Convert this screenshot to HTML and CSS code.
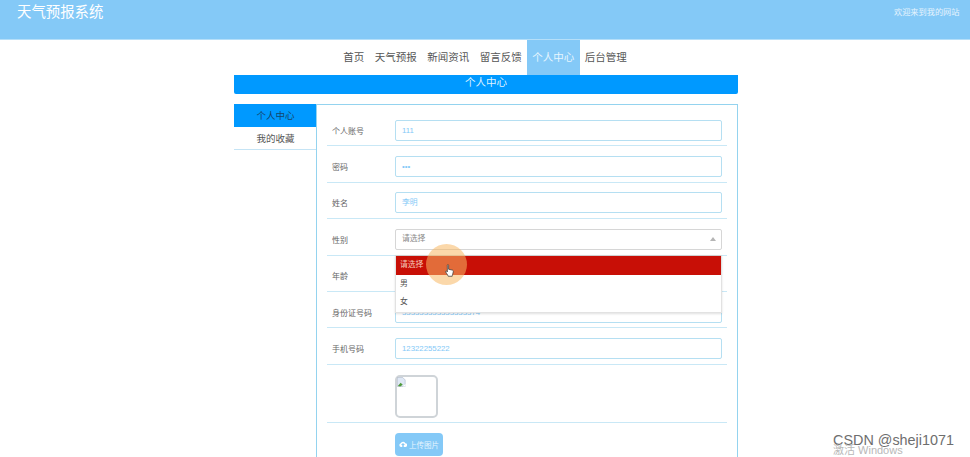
FILE: index.html
```html
<!DOCTYPE html>
<html lang="zh-CN">
<head>
    <meta charset="UTF-8">
    <title>天气预报系统</title>
    <link rel="stylesheet" href="styles.css">
</head>
<body>
    <header class="top">
        <h1>天气预报系统</h1>
        <span class="welcome">欢迎来到我的网站</span>
    </header>
    <nav class="nav">
        <a href="#">首页</a>
        <a href="#">天气预报</a>
        <a href="#">新闻资讯</a>
        <a href="#">留言反馈</a>
        <a href="#" class="active">个人中心</a>
        <a href="#">后台管理</a>
    </nav>
    <div class="wrap">
        <div class="title-bar">个人中心</div>
        <div class="content">
            <aside class="side">
                <a href="#" class="active">个人中心</a>
                <a href="#">我的收藏</a>
            </aside>
            <form class="main">
                <div class="row">
                    <label>个人账号</label>
                    <div class="field">111</div>
                </div>
                <div class="row">
                    <label>密码</label>
                    <div class="field">•••</div>
                </div>
                <div class="row">
                    <label>姓名</label>
                    <div class="field">李明</div>
                </div>
                <div class="row">
                    <label>性别</label>
                    <div class="field select">
                        <span>请选择</span>
                        <svg class="caret" width="6" height="4" viewBox="0 0 6 4"><path d="M0 4 L3 0 L6 4 Z" fill="#b5b5b5"/></svg>
                        <ul class="dropdown">
                            <li class="on">请选择</li>
                            <li>男</li>
                            <li>女</li>
                        </ul>
                    </div>
                </div>
                <div class="row">
                    <label>年龄</label>
                    <div class="field"></div>
                </div>
                <div class="row">
                    <label>身份证号码</label>
                    <div class="field">333333333333333374</div>
                </div>
                <div class="row">
                    <label>手机号码</label>
                    <div class="field">12322255222</div>
                </div>
                <div class="row row-img">
                    <div class="pic">
                        <svg width="9" height="10" viewBox="0 0 11 12">
                            <path d="M0.5 0.5 H7 L10 3.5 V11.5 H0.5 Z" fill="#dfe8f5" stroke="#a9b4c4" stroke-width="0.7"/>
                            <path d="M1 11 L4.5 7 L7 9.5 L4 11.5 Z" fill="#4f9a3c"/>
                            <path d="M7 11.5 L10.5 8 V11.5 Z" fill="#fff"/>
                        </svg>
                    </div>
                </div>
                <div class="row row-btn">
                    <button type="button" class="upload">
                        <svg width="8" height="6" viewBox="0 0 16 12"><path d="M4 12 A3.8 3.8 0 0 1 3.4 4.6 A5 5 0 0 1 12.6 4.4 A3.8 3.8 0 0 1 12.5 12 H9.5 V8 H12 L8 3.8 L4 8 H6.5 V12 Z" fill="#fff"/></svg>
                        上传图片
                    </button>
                </div>
            </form>
        </div>
    </div>

    <div class="click-mark">
        <svg width="9" height="13" viewBox="0 0 10 14"><path d="M2.6 1.2 C2.6 0.3 4 0.3 4 1.2 V5.6 L8 6.5 C9 6.8 9.4 7.4 9.2 8.4 L8.6 11 C8.4 12 8 12.6 8 13.4 H3.6 C3.4 12.4 2.6 11.6 1.6 10 L0.7 8.4 C0.3 7.6 1.2 7 1.9 7.7 L2.6 8.6 Z" fill="#fff" stroke="#333" stroke-width="0.8"/></svg>
    </div>
    <div class="watermark">
        <span class="csdn">CSDN @sheji1071</span>
        <span class="win">激活 Windows</span>
    </div>
</body>
</html>
```

FILE: styles.css
```css
html, body {
    height: 457px;
    overflow: hidden;
}
body {
    margin: 0;
    padding: 0;
    background-color: #fff;
    font-family: "Noto Sans CJK SC", "Noto Sans", sans-serif;
    color: #555;
}
a {
    color: inherit;
    text-decoration: none;
}

.top {
    height: 39px;
    background-color: #84c9f7;
    border-bottom: 1px solid #b5dff9;
    display: flex;
    justify-content: space-between;
    align-items: flex-start;
    padding: 0 10.5px 0 17px;
    color: #fff;
}
.top h1 {
    margin: 0;
    font-size: 14.4px;
    font-weight: 400;
    line-height: 22px;
}
.welcome {
    font-size: 8.2px;
    line-height: 22px;
    color: #e4f3fd;
}

.nav {
    height: 35px;
    display: flex;
    justify-content: center;
}
.nav a {
    padding: 0 5.25px;
    font-size: 10.5px;
    line-height: 34px;
    color: #555;
}
.nav a.active {
    background-color: #84c9f7;
    color: #e6f5fe;
}

.wrap {
    width: 504px;
    margin-left: 234px;
}
.title-bar {
    height: 19px;
    background-color: #0099ff;
    border-radius: 0 0 2px 2px;
    color: #dff2ff;
    font-size: 10.5px;
    line-height: 14px;
    text-align: center;
}
.content {
    display: flex;
    margin-top: 10px;
}
.side {
    width: 83px;
    flex-shrink: 0;
}
.side a {
    display: block;
    height: 22px;
    line-height: 22px;
    text-align: center;
    font-size: 9.5px;
    color: #555;
    border-bottom: 1px solid #c5e4f5;
}
.side a.active {
    background-color: #0099ff;
    border-bottom-color: #0099ff;
    color: #14466b;
}

.main {
    flex: 1;
    height: 400px;
    margin-left: -1px;
    padding: 5px 10px 0;
    border: 1px solid #94d3ef;
    border-bottom: none;
}
.row {
    display: flex;
    align-items: center;
    height: 36.4px;
    box-sizing: border-box;
    padding: 10px 5px 5px;
    border-bottom: 1px solid #c9e8f6;
}
.row label {
    width: 63px;
    flex-shrink: 0;
    font-size: 8px;
    color: #666;
}
.field {
    position: relative;
    flex: 1;
    height: 21px;
    box-sizing: border-box;
    padding: 0 6px;
    border: 1px solid #b5dff2;
    border-radius: 2px;
    font-family: "Liberation Sans", "Noto Sans CJK SC", sans-serif;
    font-size: 7.8px;
    line-height: 20px;
    color: #84c9f7;
}
.select {
    display: flex;
    justify-content: space-between;
    align-items: center;
    border-color: #d6d6d6;
    color: #8a8a8a;
}
.caret {
    margin-right: -1px;
}
.dropdown {
    position: absolute;
    z-index: 2;
    top: 25.5px;
    left: -1px;
    right: -1px;
    margin: 0;
    padding: 0;
    list-style: none;
    height: 58px;
    box-sizing: border-box;
    background-color: #fff;
    border: 1px solid #e2e2e2;
    border-top-color: #cfcfcf;
    box-shadow: 0 1px 2px rgba(0, 0, 0, 0.12);
}
.dropdown li {
    height: 18.5px;
    line-height: 18.5px;
    padding: 0 4px;
    color: #555;
}
.dropdown li.on {
    background-color: #c80f06;
    color: #f4c9b8;
}
.row-img {
    height: 58px;
    align-items: flex-start;
    padding: 10px 5px 4px 68px;
}
.pic {
    width: 43px;
    height: 43px;
    box-sizing: border-box;
    border: 2px solid #cfd4d8;
    border-radius: 5px;
    padding: 0;
    line-height: 0;
}
.row-btn {
    height: auto;
    padding: 10px 5px 0 68px;
    border-bottom: none;
}
.upload {
    display: flex;
    align-items: center;
    justify-content: center;
    gap: 2px;
    width: 48px;
    height: 23px;
    padding: 0;
    border: none;
    border-radius: 4px;
    background-color: #84c9f7;
    color: #e6f5fe;
    font-family: inherit;
    font-size: 7.5px;
}

.click-mark {
    position: absolute;
    z-index: 3;
    left: 425.5px;
    top: 244px;
    width: 41px;
    height: 41px;
    border-radius: 50%;
    background-color: rgba(247, 184, 100, 0.55);
}
.click-mark svg {
    position: absolute;
    left: 19.5px;
    top: 20px;
}
.watermark {
    position: absolute;
    z-index: 4;
    left: 833px;
    top: 432px;
    display: flex;
    flex-direction: column;
    font-family: "Liberation Sans", sans-serif;
    white-space: nowrap;
}
.csdn {
    font-size: 14.4px;
    line-height: 17px;
    color: #6e6e6e;
}
.win {
    font-size: 11px;
    line-height: 12px;
    margin-top: -5px;
    color: #b8b8b8;
    font-family: "Liberation Sans", "Noto Sans CJK SC", sans-serif;
}
```
